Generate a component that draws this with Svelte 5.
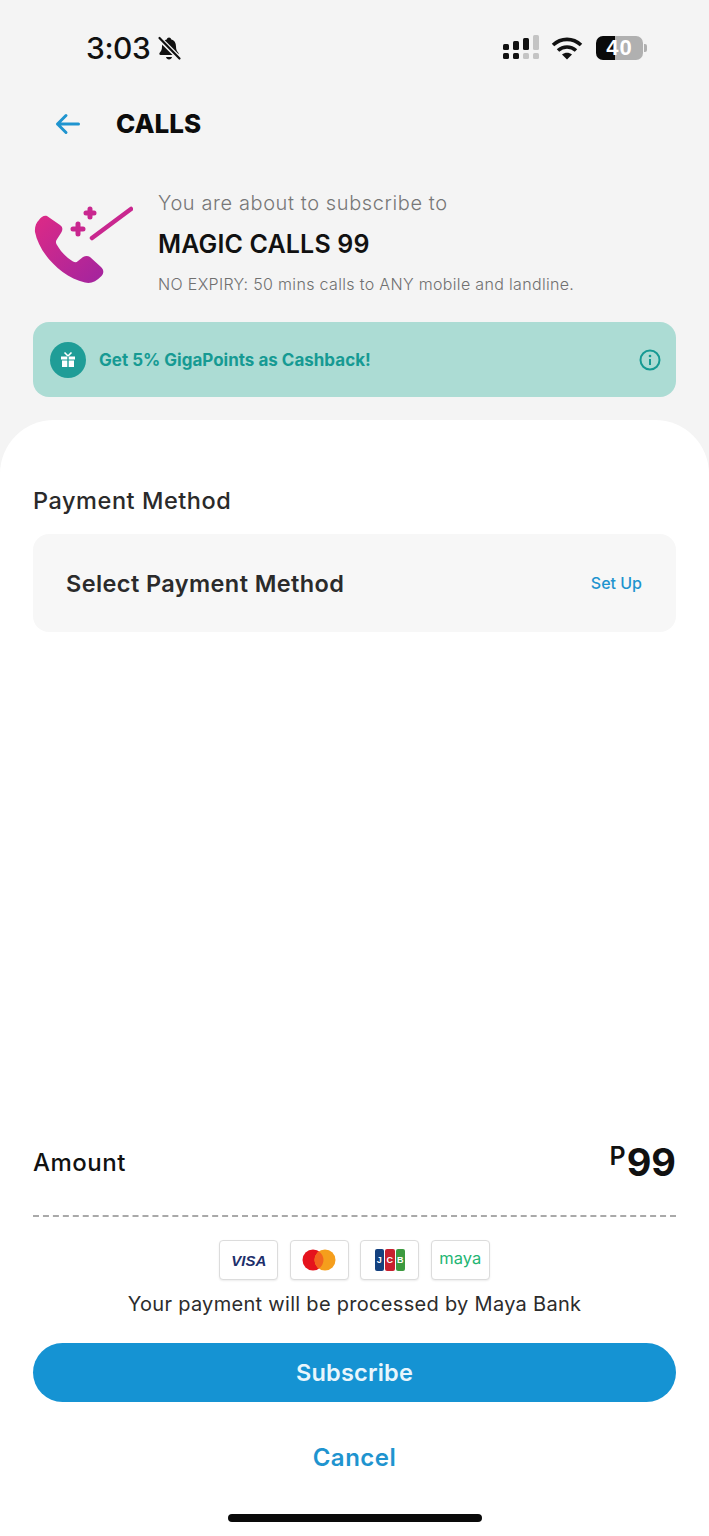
<script>
  const cards = ['visa', 'mc', 'jcb', 'maya'];
</script>

<div class="page">
  <div class="status">
    <div class="status-left">
      <span class="time">3:03</span>
      <svg class="bell" viewBox="0 0 26 26" width="26" height="26" aria-hidden="true">
        <path fill="#111" d="M13 2.500c1.200 0 2 .8 2 1.800 3.400.9 5 3.600 5 7.200 0 3 .8 4.700 2.300 6.200.8.800.3 2.300-.9 2.300H4.600c-1.200 0-1.700-1.500-.9-2.300C5.200 16.200 6 14.500 6 11.500c0-3.600 1.600-6.300 5-7.200 0-1 .8-1.800 2-1.800z"/>
        <path fill="#111" d="M10 22h6c-.3 1.500-1.500 2.500-3 2.500S10.300 23.500 10 22z"/>
        <path stroke="#f4f4f4" stroke-width="5" d="M3 3l21 21"/>
        <path stroke="#111" stroke-width="2.200" stroke-linecap="round" d="M3.500 3l20 20.500"/>
      </svg>
    </div>
    <div class="status-right">
      <svg viewBox="0 0 38 26" width="38" height="26" aria-hidden="true">
        <g fill="#111">
          <rect x="1" y="9" width="6" height="6" rx="1.500"/><rect x="11" y="6" width="6" height="9" rx="1.500"/><rect x="21" y="3" width="6" height="12" rx="1.500"/>
          <rect x="1" y="18" width="6" height="6" rx="1.500"/><rect x="11" y="18" width="6" height="6" rx="1.500"/>
        </g>
        <g fill="#c4c4c4">
          <rect x="31" y="0" width="6" height="15" rx="1.500"/><rect x="21" y="18" width="6" height="6" rx="1.500"/><rect x="31" y="18" width="6" height="6" rx="1.500"/>
        </g>
      </svg>
      <svg class="wifi" viewBox="0 0 32 24" width="32" height="24" aria-hidden="true">
        <path fill="none" stroke="#111" stroke-width="3.600" d="M2 9c8-7.500 20-7.500 28 0M7 14.500c5.200-4.700 12.800-4.700 18 0"/>
        <path fill="#111" d="M11 18.500c3-2.400 7-2.400 10 0L16 23.500z"/>
      </svg>
      <div class="battery">
        <span class="battery-num">40</span>
      </div>
      <span class="battery-cap"></span>
    </div>
  </div>

  <header class="nav">
    <svg viewBox="0 0 26 22" width="26" height="22" aria-hidden="true">
      <path fill="none" stroke="#1f94cf" stroke-width="3" stroke-linecap="round" stroke-linejoin="round" d="M2.500 11h21M11 2.500L2.500 11l8.500 8.500"/>
    </svg>
    <h1>CALLS</h1>
  </header>

  <section class="hero">
    <svg class="hero-icon" viewBox="0 0 100 80" width="100" height="80" aria-hidden="true">
      <defs>
        <linearGradient id="ph" x1="0" y1="0" x2="1" y2="1">
          <stop offset="0" stop-color="#dd2a86"/><stop offset="1" stop-color="#a2249f"/>
        </linearGradient>
      </defs>
      <path fill="url(#ph)" d="M6 15C8 12 11 10 14 11L27 20C30 22 30 25 28 28L23.500 35C22.500 37 23 38 24 40C28 47 33 52 40 56.500C42 57.500 43.500 57.500 45 56L50 52C52.500 50.500 55 50.500 57 52L68 62C71 65 71 68 68.500 71C63 76.500 58 79 52 77.500C28 72 6 48 2 27C1.500 22 3 18 6 15z"/>
      <g fill="none" stroke="#c9278f" stroke-linecap="round">
        <path stroke-width="4.500" d="M59 33L98 4"/>
        <path stroke-width="5" d="M57 4v8M53 8h8M45 19v10M40 24h10"/>
      </g>
    </svg>
    <div>
      <p class="lead">You are about to subscribe to</p>
      <h2>MAGIC CALLS 99</h2>
      <p class="desc">NO EXPIRY: 50 mins calls to ANY mobile and landline.</p>
    </div>
  </section>

  <div class="promo">
    <span class="gift">
      <svg viewBox="0 0 20 20" width="20" height="20" aria-hidden="true">
        <g fill="#fff">
          <rect x="3" y="6.500" width="6.300" height="3"/><rect x="10.700" y="6.500" width="6.300" height="3"/>
          <rect x="4" y="10.500" width="5.300" height="6.500"/><rect x="10.700" y="10.500" width="5.300" height="6.500"/>
        </g>
        <path fill="none" stroke="#fff" stroke-width="1.600" d="M10 6L6.500 2.500M10 6l3.500-3.500"/>
      </svg>
    </span>
    <span class="promo-text">Get 5% GigaPoints as Cashback!</span>
    <svg viewBox="0 0 22 22" width="22" height="22" aria-hidden="true">
      <circle cx="11" cy="11" r="9.500" fill="none" stroke="#169a93" stroke-width="2"/>
      <rect x="10" y="10" width="2" height="6" fill="#169a93"/>
      <circle cx="11" cy="7" r="1.300" fill="#169a93"/>
    </svg>
  </div>

  <main class="sheet">
    <h3>Payment Method</h3>
    <div class="method">
      <span class="method-label">Select Payment Method</span>
      <span class="setup">Set Up</span>
    </div>

    <div class="amount">
      <span class="amount-label">Amount</span>
      <span class="price"><sup>P</sup>99</span>
    </div>
    <div class="dash"></div>

    <div class="cards">
      {#each cards as c}
        <div class="card">
          {#if c === 'visa'}
            <span class="visa">VISA</span>
          {:else if c === 'mc'}
            <svg viewBox="0 0 34 22" width="34" height="22" aria-hidden="true">
              <circle cx="11" cy="11" r="10.500" fill="#e5131d"/>
              <circle cx="23" cy="11" r="10.500" fill="#f59e1c"/>
              <path fill="#f2641f" d="M17 2.400a10.500 10.500 0 0 1 0 17.200 10.500 10.500 0 0 1 0-17.200z"/>
            </svg>
          {:else if c === 'jcb'}
            <div class="jcb"><span class="j">J</span><span class="c">C</span><span class="b">B</span></div>
          {:else}
            <span class="maya">maya</span>
          {/if}
        </div>
      {/each}
    </div>
    <p class="processed">Your payment will be processed by Maya Bank</p>

    <button class="subscribe">Subscribe</button>
    <button class="cancel">Cancel</button>
    <div class="home"></div>
  </main>
</div>

<style>
  :global(body) {
    margin: 0;
    background: #f4f4f4;
  }
  .page {
    width: 709px;
    height: 1536px;
    overflow: hidden;
    display: flex;
    flex-direction: column;
    background: #f4f4f4;
    font-family: Inter, "Noto Sans", "Liberation Sans", sans-serif;
    color: #1b1b1b;
  }
  .status {
    height: 32px;
    margin-top: 32px;
    padding: 0 62px 0 86px;
    display: flex;
    align-items: center;
    justify-content: space-between;
  }
  .status-left, .status-right {
    display: flex;
    align-items: center;
  }
  .status-left { gap: 6px; }
  .time {
    font: 500 30px/32px Inter, sans-serif;
    letter-spacing: -0.4px;
    color: #111;
  }
  .wifi { margin-left: 11px; }
  .battery {
    width: 47px;
    height: 24px;
    margin-left: 13px;
    display: flex;
    align-items: center;
    justify-content: center;
    border-radius: 7px;
    background: linear-gradient(to right, #0a0a0a 19px, #b0b0b0 19px);
  }
  .battery-num {
    font: 700 22px/22px "Liberation Sans", sans-serif;
    letter-spacing: 1px;
    color: #fff;
  }
  .battery-cap {
    width: 3px;
    height: 8px;
    margin-left: 1px;
    border-radius: 0 2px 2px 0;
    background: #b0b0b0;
  }
  .nav {
    height: 40px;
    margin-top: 40px;
    padding-left: 55px;
    display: flex;
    align-items: center;
    gap: 35px;
  }
  h1 {
    margin: 0;
    font-size: 26px;
    line-height: 40px;
    font-weight: 800;
    color: #0c0c0c;
  }
  .hero {
    height: 108px;
    margin-top: 45px;
    padding-left: 33px;
    display: flex;
    align-items: flex-start;
    gap: 25px;
  }
  .hero-icon {
    margin-top: 16px;
    flex: none;
  }
  .lead {
    margin: 0;
    font-size: 20px;
    line-height: 28px;
    font-weight: 300;
    letter-spacing: 0.6px;
    color: #777;
  }
  h2 {
    margin: 12px 0 0;
    font-size: 25px;
    line-height: 30px;
    font-weight: 600;
    letter-spacing: 0.15px;
    color: #111;
  }
  .desc {
    margin: 14px 0 0;
    font-size: 16px;
    line-height: 22px;
    font-weight: 300;
    letter-spacing: 0.33px;
    color: #707070;
  }
  .promo {
    height: 75px;
    margin: 25px 33px 0;
    padding: 0 15px 0 17px;
    display: flex;
    align-items: center;
    border-radius: 16px;
    background: #acdcd4;
  }
  .gift {
    width: 36px;
    height: 36px;
    flex: none;
    display: flex;
    align-items: center;
    justify-content: center;
    border-radius: 50%;
    background: #1f9d97;
  }
  .promo-text {
    flex: 1;
    margin-left: 13px;
    font-size: 17px;
    font-weight: 700;
    color: #169a93;
  }
  .sheet {
    flex: 1;
    margin-top: 23px;
    padding: 0 33px;
    display: flex;
    flex-direction: column;
    border-radius: 54px 54px 0 0;
    background: #fff;
  }
  h3 {
    margin: 64px 0 0;
    font-size: 23.500px;
    line-height: 34px;
    font-weight: 500;
    letter-spacing: 0.55px;
    color: #2a2a2a;
  }
  .method {
    height: 98px;
    margin-top: 16px;
    padding: 0 34px 0 33px;
    box-sizing: border-box;
    display: flex;
    align-items: center;
    justify-content: space-between;
    border-radius: 16px;
    background: #f7f7f7;
  }
  .method-label {
    font-size: 23.500px;
    font-weight: 600;
    letter-spacing: 0.4px;
    color: #2b2b2b;
  }
  .setup {
    font-size: 16px;
    font-weight: 500;
    color: #1f94cf;
  }
  .amount {
    margin-top: 505px;
    height: 50px;
    display: flex;
    align-items: center;
    justify-content: space-between;
  }
  .amount-label {
    font-size: 24px;
    font-weight: 500;
    letter-spacing: 0.5px;
    color: #111;
  }
  .price {
    font-size: 38px;
    line-height: 50px;
    font-weight: 700;
    color: #111;
  }
  .price sup {
    font-size: 25px;
    line-height: 0;
    font-weight: 600;
    vertical-align: 11px;
    margin-right: 1px;
  }
  .dash {
    margin-top: 28px;
    border-top: 2px dashed #a9a9a9;
  }
  .cards {
    margin-top: 23px;
    display: flex;
    justify-content: center;
    gap: 11.500px;
  }
  .card {
    box-sizing: border-box;
    width: 59px;
    height: 40px;
    display: flex;
    align-items: center;
    justify-content: center;
    border: 1px solid #dcdcdc;
    border-radius: 4px;
    background: #fff;
    box-shadow: 0 1px 2px rgba(0, 0, 0, 0.08);
  }
  .visa {
    font: italic 800 15px/1 "Liberation Sans", sans-serif;
    color: #1d2f6b;
  }
  .jcb {
    display: flex;
    height: 22px;
    gap: 1px;
  }
  .jcb span {
    width: 9.500px;
    display: flex;
    align-items: center;
    justify-content: center;
    border-radius: 2px;
    font: 700 9px/1 "Liberation Sans", sans-serif;
    color: #fff;
  }
  .j { background: #14417f; }
  .c { background: #c8202f; }
  .b { background: #3c9a3f; }
  .maya {
    font-size: 16.500px;
    font-weight: 400;
    line-height: 1;
    color: #22b573;
    padding-bottom: 3px;
  }
  .processed {
    margin: 10px 0 0;
    text-align: center;
    font-size: 20px;
    line-height: 28px;
    letter-spacing: 0.3px;
    color: #2c2c2c;
  }
  button {
    font-family: inherit;
    border: 0;
    padding: 0;
  }
  .subscribe {
    height: 59px;
    margin-top: 25px;
    border-radius: 30px;
    background: #1593d3;
    color: #e9f6fc;
    font-size: 23.500px;
    font-weight: 600;
    letter-spacing: 0.2px;
  }
  .cancel {
    height: 40px;
    margin-top: 35px;
    background: none;
    color: #1f94cf;
    font-size: 24px;
    font-weight: 600;
    letter-spacing: 0.5px;
  }
  .home {
    width: 254px;
    height: 8px;
    margin: 37px auto 0;
    border-radius: 4px;
    background: #0a0a0a;
  }
</style>
